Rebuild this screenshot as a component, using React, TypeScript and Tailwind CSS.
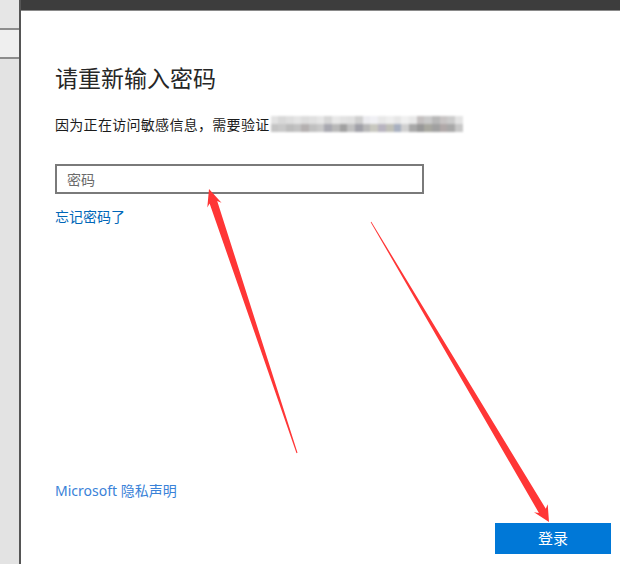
type Pt = [number, number];

// Tapered arrow: thin tail, thicker shaft near the head, notched triangular head
function arrowPoints(tail: Pt, tip: Pt, tailW: number, baseW: number, headLen: number, headHalf: number, notch: number) {
  const dx = tip[0] - tail[0];
  const dy = tip[1] - tail[1];
  const len = Math.hypot(dx, dy);
  const u: Pt = [dx / len, dy / len];
  const n: Pt = [-u[1], u[0]];
  const at = (d: number, off: number): Pt => [tip[0] - u[0] * d + n[0] * off, tip[1] - u[1] * d + n[1] * off];
  const pts: Pt[] = [
    [tail[0] + (n[0] * tailW) / 2, tail[1] + (n[1] * tailW) / 2],
    at(headLen - notch, baseW / 2),
    at(headLen, headHalf),
    tip,
    at(headLen, -headHalf),
    at(headLen - notch, -baseW / 2),
    [tail[0] - (n[0] * tailW) / 2, tail[1] - (n[1] * tailW) / 2],
  ];
  return pts.map((p) => `${p[0].toFixed(1)},${p[1].toFixed(1)}`).join(" ");
}

const topRow = [
  "bg-[#e2e2e2]", "bg-[#d8d8d8]", "bg-[#dedede]", "bg-[#e4e4e4]", "bg-[#dcdcdc]",
  "bg-[#e0e0e0]", "bg-[#e6e6e6]", "bg-[#d6d6d6]", "bg-[#e8e8e8]", "bg-[#e2e2e2]",
  "bg-[#e0e0e0]", "bg-[#cfcfcf]", "bg-[#ececf0]", "bg-[#f0f0f4]", "bg-[#e8e8e8]",
  "bg-[#eeeeee]", "bg-[#e6e6e6]", "bg-[#f0f0f0]", "bg-[#e8e8e8]", "bg-[#c4c0c0]",
  "bg-[#cacaca]", "bg-[#b8b8b8]", "bg-[#c8c4c4]", "bg-[#cccccc]", "bg-[#e4e4e4]",
];

const bottomRow = [
  "bg-[#c4c4c4]", "bg-[#c8c8c8]", "bg-[#bcbcbc]", "bg-[#c2c2c2]", "bg-[#b4b0b0]",
  "bg-[#c0c0c0]", "bg-[#c8c8c8]", "bg-[#a8a8b0]", "bg-[#b8b8b8]", "bg-[#a0a0a0]",
  "bg-[#c0c0c0]", "bg-[#a0a0a8]", "bg-[#b8b8b8]", "bg-[#c8c8c0]", "bg-[#b8b4c0]",
  "bg-[#c0c0b8]", "bg-[#a8b0c0]", "bg-[#d0d0d0]", "bg-[#a8a8a8]", "bg-[#989898]",
  "bg-[#a8a8a0]", "bg-[#a0a0a0]", "bg-[#b0a8a8]", "bg-[#a8a8a8]", "bg-[#c8c8c8]",
];

function MaskedAccount() {
  return (
    <div className="ml-[1px] flex w-[192px] flex-col blur-[0.8px]">
      <div className="flex h-[8px]">
        {topRow.map((c, i) => (
          <div key={i} className={`flex-1 ${c}`} />
        ))}
      </div>
      <div className="flex h-[8px]">
        {bottomRow.map((c, i) => (
          <div key={i} className={`flex-1 ${c}`} />
        ))}
      </div>
    </div>
  );
}

export default function App() {
  return (
    <div
      className="relative flex h-[564px] w-[620px] overflow-hidden bg-white"
      style={{ fontFamily: '"Noto Sans CJK SC", "Noto Sans", sans-serif' }}
    >
      {/* background window strip on the left */}
      <div className="flex w-[19px] shrink-0 flex-col bg-[#e3e3e3]">
        <div className="h-[28px] bg-[#e6e6e6]" />
        <div className="h-[2px] bg-[#8c8c8c]" />
        <div className="h-[27px] bg-[#efefef]" />
        <div className="h-[2px] bg-[#8c8c8c]" />
        <div className="flex-1 bg-[#e3e3e3]" />
      </div>
      <div className="w-[2px] shrink-0 bg-[#555555]" />

      <div className="flex flex-1 flex-col">
        <div className="h-[11px] shrink-0 border-b border-[#8a8a8a] bg-[#3d3d3d]" />

        <div className="flex flex-1 flex-col pl-[34px] pr-[9px] pb-[10px]">
          <h1 className="mt-[50px] text-[23px] leading-[32px] font-normal text-[#262626]">请重新输入密码</h1>

          <div className="mt-[21px] flex items-center text-[14px] leading-[20px] text-[#1b1b1b]">
            <span className="tracking-[0.3px]">因为正在访问敏感信息，需要验证</span>
            <MaskedAccount />
          </div>

          <div className="mt-[30px] flex h-[30px] w-[369px] items-center border-2 border-[#7a7a7a] px-[10px] text-[14px] text-[#6b6b6b]">
            密码
          </div>

          <a className="mt-[12px] text-[14px] leading-[20px] text-[#0067b8]">忘记密码了</a>

          <a className="mt-auto text-[14px] leading-[20px] text-[#3a82d8]" style={{ fontFamily: '"Noto Sans", "Noto Sans CJK SC", sans-serif' }}>
            Microsoft 隐私声明
          </a>

          <div className="mt-[22px] flex justify-end">
            <button className="flex h-[31px] w-[116px] items-center justify-center bg-[#0078d7] text-[15px] text-white">
              登录
            </button>
          </div>
        </div>
      </div>

      {/* red annotation arrows */}
      <svg className="pointer-events-none absolute inset-0" width="620" height="564" viewBox="0 0 620 564">
        <polygon points={arrowPoints([297, 453], [209, 189], 1, 8, 17, 7.5, 3)} fill="#ff3636" />
        <polygon points={arrowPoints([371, 222], [549, 522], 0.8, 8, 16, 8, 3)} fill="#ff3636" />
      </svg>
    </div>
  );
}
